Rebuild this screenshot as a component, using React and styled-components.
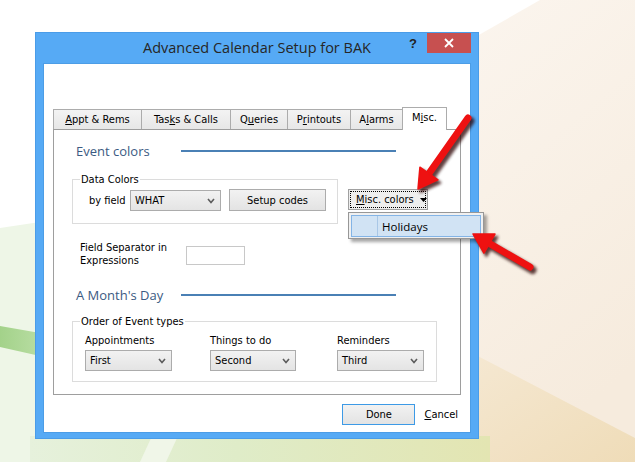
import React from "react";
import styled, { createGlobalStyle } from "styled-components";

const UI = `"DejaVu Sans Condensed", Roboto, sans-serif`;
const SEGOE = `"Open Sans", "Noto Sans", sans-serif`;

const GlobalStyle = createGlobalStyle`
  html, body { margin: 0; padding: 0; background: #fff; }
  body { font-family: ${UI}; }
  * { box-sizing: border-box; }
`;

const Desktop = styled.div`
  position: relative;
  width: 635px;
  height: 462px;
  overflow: hidden;
  padding: 32px 0 0 35px;
  background: #fff;
`;

const Wallpaper = styled.svg`
  position: absolute;
  left: 0;
  top: 0;
  z-index: 0;
`;

const Overlay = styled.svg`
  position: absolute;
  left: 0;
  top: 0;
  z-index: 10;
  pointer-events: none;
`;

const Window = styled.div`
  position: relative;
  z-index: 1;
  width: 444px;
  height: 407px;
  background: #56aaf5;
  border: 1px solid #4a9ce8;
  padding: 0 7px 5px;
  display: flex;
  flex-direction: column;
`;

const TitleBar = styled.div`
  flex: none;
  height: 30px;
  display: grid;
  grid-template-columns: 1fr auto 1fr;
  align-items: center;
`;

const TitleText = styled.div`
  grid-column: 2;
  font-family: ${SEGOE};
  font-size: 14.5px;
  color: #262626;
  white-space: nowrap;
  margin-top: -2px;
`;

const TitleControls = styled.div`
  grid-column: 3;
  justify-self: end;
  align-self: start;
  display: flex;
`;

const HelpButton = styled.div`
  width: 28px;
  height: 20px;
  display: flex;
  align-items: center;
  justify-content: center;
  font: bold 13px "Liberation Sans", sans-serif;
  color: #222;
`;

const CloseButton = styled.div`
  width: 44px;
  height: 20px;
  background: #c75050;
  display: flex;
  align-items: center;
  justify-content: center;
`;

const Client = styled.div`
  flex: 1;
  background: #fff;
  border: 1px solid #4c9de6;
  padding: 43px 9px 0 9px;
  display: flex;
  flex-direction: column;
`;

const TabStrip = styled.div`
  position: relative;
  z-index: 1;
  display: flex;
  align-items: flex-end;
  height: 22px;
`;

const Tab = styled.div`
  width: ${(p) => p.$w}px;
  height: ${(p) => (p.$active ? 23 : 20)}px;
  margin-bottom: ${(p) => (p.$active ? -1 : 0)}px;
  margin-left: -1px;
  &:first-child { margin-left: 0; }
  border: 1px solid #acacac;
  border-bottom: none;
  background: ${(p) => (p.$active ? "#fff" : "linear-gradient(#f3f3f3, #e7e7e7)")};
  display: flex;
  align-items: center;
  justify-content: center;
  padding-bottom: ${(p) => (p.$active ? 3 : 0)}px;
  font-size: 11px;
  color: #000;
  white-space: nowrap;
`;

const Panel = styled.div`
  border: 1px solid #9e9e9e;
  height: 266px;
  padding: 12px 0 0 18px;
  display: flex;
  flex-direction: column;
`;

const HeadingRow = styled.div`
  display: grid;
  grid-template-columns: 105px 215px;
  align-items: center;
  padding-left: 4px;
  height: 18px;
  margin-top: ${(p) => p.$mt || 0}px;
`;

const Heading = styled.div`
  font-family: ${SEGOE};
  font-size: 13px;
  line-height: 18px;
  color: #3b5a82;
  white-space: nowrap;
`;

const Rule = styled.div`
  height: 2px;
  background: #4a80b5;
`;

const Row = styled.div`
  display: flex;
  align-items: flex-start;
  margin-top: ${(p) => p.$mt || 0}px;
  padding-left: ${(p) => p.$pl || 0}px;
`;

const GroupBox = styled.div`
  position: relative;
  width: ${(p) => p.$w}px;
  height: ${(p) => p.$h}px;
  border: 1px solid #dcdcdc;
  padding: ${(p) => p.$pad};
  flex: none;
`;

const Legend = styled.span`
  position: absolute;
  top: -7px;
  left: 7px;
  padding: 0 1px;
  background: #fff;
  font-size: 11px;
  line-height: 13px;
  white-space: nowrap;
`;

const FieldLine = styled.div`
  display: flex;
  align-items: center;
`;

const Label = styled.span`
  font-size: 11px;
  line-height: 13px;
  width: ${(p) => (p.$w ? `${p.$w}px` : "auto")};
  white-space: nowrap;
  flex: none;
`;

const Combo = styled.div`
  width: ${(p) => p.$w}px;
  height: ${(p) => p.$h || 20}px;
  margin-top: ${(p) => p.$mt || 0}px;
  border: 1px solid #acacac;
  background: linear-gradient(#f2f2f2, #e4e4e4);
  display: flex;
  align-items: center;
  justify-content: space-between;
  padding: 0 5px 0 4px;
  font-size: 11px;
  flex: none;
`;

const PushButton = styled.div`
  width: ${(p) => p.$w}px;
  height: ${(p) => p.$h}px;
  margin-left: ${(p) => p.$ml || 0}px;
  border: 1px solid ${(p) => (p.$default ? "#3d9ae6" : "#acacac")};
  background: linear-gradient(#f2f2f2, #e3e3e3);
  display: flex;
  align-items: center;
  justify-content: center;
  font-size: 11px;
  flex: none;
`;

const MiscWrap = styled.div`
  position: relative;
  margin-left: 10px;
  margin-top: 10px;
`;

const MiscButton = styled.div`
  width: 80px;
  height: 21px;
  border: 1px solid #a0a0a0;
  outline: 1px dotted #000;
  outline-offset: -3px;
  background: #eeeeee;
  display: flex;
  align-items: center;
  gap: 6px;
  padding-left: 7px;
  font-size: 11px;
`;

const Menu = styled.div`
  position: absolute;
  top: 23px;
  left: 0;
  width: 136px;
  height: 27px;
  background: #f0f0f0;
  border: 1px solid #979797;
  box-shadow: 3px 3px 3px rgba(0, 0, 0, 0.35);
  padding: 2px;
  z-index: 5;
`;

const MenuItem = styled.div`
  height: 22px;
  background: #d1e3f4;
  border: 1px solid #83b4e6;
  display: flex;
  align-items: stretch;
`;

const MenuGutter = styled.div`
  width: 26px;
  border-right: 1px solid #a9c7e6;
`;

const MenuText = styled.div`
  display: flex;
  align-items: center;
  padding-left: 4px;
  font-family: ${SEGOE};
  font-size: 11.5px;
  color: #000;
`;

const TextBox = styled.div`
  width: 59px;
  height: 19px;
  margin-top: 5px;
  border: 1px solid #c8c8c8;
  background: #fff;
`;

const Columns = styled.div`
  display: grid;
  grid-template-columns: 125px 127px 87px;
`;

const Column = styled.div`
  display: flex;
  flex-direction: column;
`;

const Footer = styled.div`
  display: flex;
  justify-content: flex-end;
  align-items: center;
  gap: 8px;
  margin-top: 9px;
  padding-right: 2px;
`;

const LinkButton = styled.div`
  font-size: 11px;
  padding: 0 1px;
`;

const Chevron = () => (
  <svg width="8" height="6" viewBox="0 0 8 6">
    <polyline points="1,1 4,4.5 7,1" fill="none" stroke="#5c5c5c" strokeWidth="1.6" />
  </svg>
);

const DropTriangle = () => (
  <svg width="7" height="4" viewBox="0 0 7 4">
    <polygon points="0,0 7,0 3.5,4" fill="#000" />
  </svg>
);

const tabs = [
  { w: 89, pre: "", acc: "A", post: "ppt & Rems" },
  { w: 90, pre: "Tas", acc: "k", post: "s & Calls" },
  { w: 58, pre: "Q", acc: "u", post: "eries" },
  { w: 64, pre: "P", acc: "r", post: "intouts" },
  { w: 53, pre: "A", acc: "l", post: "arms" },
  { w: 45, pre: "M", acc: "i", post: "sc.", active: true },
];

const orders = [
  { label: "Appointments", value: "First", w: 87 },
  { label: "Things to do", value: "Second", w: 86 },
  { label: "Reminders", value: "Third", w: 87 },
];

function arrowGeom(tail, tip, headLen = 19, headHalf = 11) {
  const dx = tip[0] - tail[0];
  const dy = tip[1] - tail[1];
  const L = Math.hypot(dx, dy);
  const ux = dx / L;
  const uy = dy / L;
  const bx = tip[0] - ux * headLen;
  const by = tip[1] - uy * headLen;
  const nx = -uy;
  const ny = ux;
  return {
    shaft: `M${tail[0]} ${tail[1]} L${bx + ux * 3} ${by + uy * 3}`,
    head: `${tip[0]},${tip[1]} ${bx + nx * headHalf},${by + ny * headHalf} ${bx - nx * headHalf},${by - ny * headHalf}`,
  };
}

const arrows = [
  arrowGeom([468, 118], [418, 189]),
  arrowGeom([530, 267], [473, 234]),
];

export default function App() {
  return (
    <>
      <GlobalStyle />
      <Desktop>
        <Wallpaper width="635" height="462" viewBox="0 0 635 462">
          <defs>
            <linearGradient id="peach" x1="0" y1="0" x2="0.3" y2="1">
              <stop offset="0" stopColor="#fbf5ee" />
              <stop offset="1" stopColor="#f6ebdd" />
            </linearGradient>
            <linearGradient id="tan" x1="0" y1="0" x2="1" y2="1">
              <stop offset="0" stopColor="#f5e8d2" />
              <stop offset="1" stopColor="#efdcb8" />
            </linearGradient>
            <linearGradient id="band" x1="0" y1="0" x2="1" y2="0">
              <stop offset="0" stopColor="#a3d28a" />
              <stop offset="1" stopColor="#b8dda2" />
            </linearGradient>
            <linearGradient id="bottom" x1="0" y1="0" x2="1" y2="0">
              <stop offset="0" stopColor="#e6f1dc" />
              <stop offset="0.45" stopColor="#dfecc8" />
              <stop offset="1" stopColor="#e3e5b2" />
            </linearGradient>
          </defs>
          <rect width="635" height="462" fill="#ffffff" />
          <polygon points="540,0 635,0 635,462 470,462 470,40" fill="url(#peach)" />
          <polygon points="470,352 635,438 635,462 470,462" fill="url(#tan)" />
          <polygon points="0,228 40,222 40,462 0,462" fill="#eef6e7" />
          <polygon points="0,326 40,333 40,356 0,347" fill="url(#band)" />
          <rect x="30" y="436" width="460" height="26" fill="url(#bottom)" />
          <polygon points="140,462 152,436 178,436 166,462" fill="#f0f6e8" />
        </Wallpaper>

        <Window>
          <TitleBar>
            <TitleText>Advanced Calendar Setup for BAK</TitleText>
            <TitleControls>
              <HelpButton>?</HelpButton>
              <CloseButton>
                <svg width="10" height="10" viewBox="0 0 10 10">
                  <path d="M1 1 L9 9 M9 1 L1 9" stroke="#fff" strokeWidth="1.8" />
                </svg>
              </CloseButton>
            </TitleControls>
          </TitleBar>

          <Client>
            <TabStrip>
              {tabs.map((t, i) => (
                <Tab key={i} $w={t.w} $active={t.active}>
                  {t.pre}
                  <u>{t.acc}</u>
                  {t.post}
                </Tab>
              ))}
            </TabStrip>

            <Panel>
              <HeadingRow>
                <Heading>Event colors</Heading>
                <Rule />
              </HeadingRow>

              <Row $mt={19}>
                <GroupBox $w={266} $h={45} $pad="9px 0 0 16px">
                  <Legend>Data Colors</Legend>
                  <FieldLine>
                    <Label $w={41}>by field</Label>
                    <Combo $w={91} $h={21} $mt={1}>
                      <span>WHAT</span>
                      <Chevron />
                    </Combo>
                    <PushButton $w={97} $h={22} $ml={8}>
                      Setup codes
                    </PushButton>
                  </FieldLine>
                </GroupBox>
                <MiscWrap>
                  <MiscButton>
                    <span>
                      <u>M</u>isc. colors
                    </span>
                    <DropTriangle />
                  </MiscButton>
                  <Menu>
                    <MenuItem>
                      <MenuGutter />
                      <MenuText>Holidays</MenuText>
                    </MenuItem>
                  </Menu>
                </MiscWrap>
              </Row>

              <Row $mt={17} $pl={8}>
                <Label $w={106}>
                  Field Separator in
                  <br />
                  Expressions
                </Label>
                <TextBox />
              </Row>

              <HeadingRow $mt={19}>
                <Heading>A Month's Day</Heading>
                <Rule />
              </HeadingRow>

              <Row $mt={17}>
                <GroupBox $w={365} $h={61} $pad="12px 0 0 12px">
                  <Legend>Order of Event types</Legend>
                  <Columns>
                    {orders.map((o) => (
                      <Column key={o.label}>
                        <Label>{o.label}</Label>
                        <Combo $w={o.w} $h={21} $mt={3}>
                          <span>{o.value}</span>
                          <Chevron />
                        </Combo>
                      </Column>
                    ))}
                  </Columns>
                </GroupBox>
              </Row>
            </Panel>

            <Footer>
              <PushButton $w={73} $h={21} $default>
                Done
              </PushButton>
              <LinkButton>
                <u>C</u>ancel
              </LinkButton>
            </Footer>
          </Client>
        </Window>

        <Overlay width="635" height="462" viewBox="0 0 635 462">
          <defs>
            <filter id="blur" x="-20%" y="-20%" width="140%" height="140%">
              <feGaussianBlur stdDeviation="1.6" />
            </filter>
          </defs>
          {arrows.map((a, i) => (
            <g key={i}>
              <g transform="translate(2.5 3)" filter="url(#blur)" opacity="0.75">
                <path d={a.shaft} stroke="#2a0000" strokeWidth="8" strokeLinecap="round" fill="none" />
                <polygon points={a.head} fill="#2a0000" stroke="#2a0000" strokeWidth="2" strokeLinejoin="round" />
              </g>
              <path d={a.shaft} stroke="#ee1111" strokeWidth="7" strokeLinecap="round" fill="none" />
              <polygon points={a.head} fill="#ee1111" stroke="#ee1111" strokeWidth="1.5" strokeLinejoin="round" />
            </g>
          ))}
        </Overlay>
      </Desktop>
    </>
  );
}
